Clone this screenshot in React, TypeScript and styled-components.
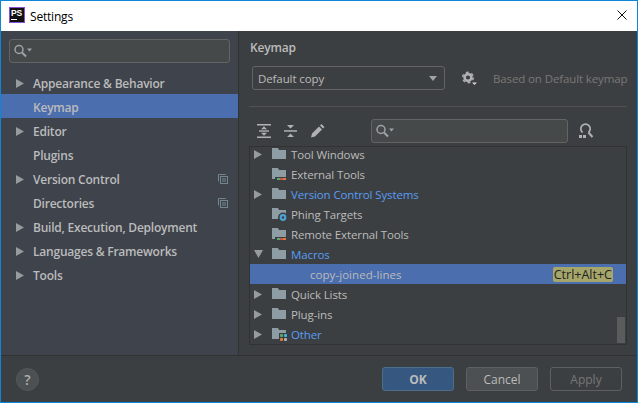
import React from 'react';
import styled, { createGlobalStyle } from 'styled-components';

const GlobalStyle = createGlobalStyle`
  html, body { margin: 0; padding: 0; background: #3c3f41; }
  body { font-family: "Open Sans", "Noto Sans", sans-serif; }
  * { box-sizing: border-box; }
`;

const Window = styled.div`
  width: 638px;
  height: 403px;
  border: 1px solid #0f86d8;
  display: flex;
  flex-direction: column;
  overflow: hidden;
  background: #3c3f41;
`;

const TitleBar = styled.div`
  height: 30px;
  flex: none;
  background: #fff;
  display: flex;
  align-items: center;
  padding: 0 9px 0 8px;
  gap: 5px;
  color: #000;
  font-size: 12px;
  letter-spacing: -0.2px;
`;

const AppIcon = styled.svg`
  margin-bottom: 2px;
`;

const CloseBox = styled.div`
  margin: 0 1px 2px auto;
  display: flex;
`;

const Body = styled.div`
  flex: 1;
  min-height: 0;
  display: flex;
`;

const Sidebar = styled.div`
  width: 238px;
  flex: none;
  background: #3e434c;
  border-right: 1px solid #323232;
  padding-top: 8px;
`;

const SearchBox = styled.div<{ $w: number }>`
  width: ${(p) => p.$w}px;
  height: 24px;
  background: #45494a;
  border: 1px solid #646464;
  border-radius: 3px;
  display: flex;
  align-items: center;
  padding-left: 4px;
  flex: none;
`;

const SideSearch = styled.div`
  padding: 0 0 7px 8px;
`;

const SideRow = styled.div<{ $active?: boolean }>`
  height: 24px;
  display: flex;
  align-items: center;
  padding: 2px 0 0 15px;
  font-size: 12px;
  font-weight: 600;
  letter-spacing: -0.22px;
  color: #bbbbbb;
  background: ${(p) => (p.$active ? '#4b6eaf' : 'transparent')};
`;

const ArrowSlot = styled.span`
  width: 17px;
  flex: none;
  display: flex;
  align-items: center;
`;

const CopyIcon = styled.span`
  margin-left: auto;
  margin-right: 10px;
  display: flex;
`;

const Main = styled.div`
  flex: 1;
  min-width: 0;
  display: flex;
  flex-direction: column;
  padding: 9px 10px 0 10px;
`;

const Heading = styled.div`
  font-size: 12px;
  font-weight: 600;
  color: #bbbbbb;
  height: 16px;
  line-height: 16px;
  letter-spacing: -0.2px;
  margin-left: 1px;
`;

const SchemeRow = styled.div`
  display: flex;
  align-items: center;
  margin: 10px 0 0 3px;
  height: 24px;
`;

const Combo = styled.div`
  width: 193px;
  height: 24px;
  flex: none;
  background: #3c3f41;
  border: 1px solid #646464;
  border-radius: 3px;
  display: flex;
  align-items: center;
  justify-content: space-between;
  padding: 0 7px 0 5px;
  font-size: 11.5px;
  letter-spacing: -0.1px;
  color: #bbbbbb;
`;

const GearSlot = styled.span`
  display: flex;
  flex: none;
  margin-left: 17px;
`;

const Hint = styled.span`
  margin-left: 15px;
  font-size: 11.5px;
  color: #787878;
  white-space: nowrap;
  letter-spacing: -0.12px;
`;

const Rule = styled.div`
  height: 1px;
  background: #515151;
  margin-top: 16px;
`;

const Toolbar = styled.div`
  display: flex;
  align-items: center;
  height: 24px;
  margin: 12px 0 0 8px;
`;

const ToolIcon = styled.span`
  width: 27px;
  flex: none;
  display: flex;
`;

const ToolSearch = styled.div`
  margin-left: 33px;
`;

const FindSlot = styled.span`
  display: flex;
  margin-left: 10px;
`;

const Tree = styled.div`
  position: relative;
  margin-top: 3px;
  height: 199px;
  border: 1px solid #323232;
  overflow: hidden;
`;

const TreeList = styled.div`
  margin-top: -3px;
`;

const TreeRow = styled.div<{ $active?: boolean; $link?: boolean }>`
  height: 20px;
  display: flex;
  align-items: center;
  padding-left: 4px;
  font-size: 11.5px;
  letter-spacing: -0.12px;
  white-space: nowrap;
  color: ${(p) => (p.$link ? '#589df6' : '#bbbbbb')};
  background: ${(p) => (p.$active ? '#4b6eaf' : 'transparent')};
`;

const TreeArrow = styled.span`
  width: 18px;
  flex: none;
  display: flex;
`;

const TreeIcon = styled.span`
  width: 19px;
  flex: none;
  display: flex;
`;

const LeafLabel = styled.span`
  margin-left: 56px;
  letter-spacing: 0.05px;
`;

const Shortcut = styled.span`
  margin-left: auto;
  margin-right: 13px;
  height: 15px;
  display: flex;
  align-items: center;
  padding: 0 1px;
  background: #a6a66a;
  border-radius: 2px;
  color: #222;
  font-size: 12.5px;
  letter-spacing: 0;
`;

const Scroll = styled.div`
  position: absolute;
  right: 1px;
  bottom: 1px;
  width: 8px;
  height: 26px;
  background: #595b5d;
`;

const Footer = styled.div`
  height: 47px;
  flex: none;
  border-top: 1px solid #323232;
  display: flex;
  align-items: center;
  padding: 0 15px;
`;

const Help = styled.div`
  width: 23px;
  height: 23px;
  border-radius: 50%;
  background: #4c5052;
  border: 1px solid #53585a;
  color: #b0b0b0;
  font-size: 14px;
  font-weight: 600;
  display: flex;
  align-items: center;
  justify-content: center;
`;

const Buttons = styled.div`
  margin-left: auto;
  display: flex;
  gap: 12px;
`;

const Button = styled.div<{ $kind?: 'primary' | 'off' }>`
  width: 72px;
  height: 24px;
  border-radius: 3px;
  display: flex;
  align-items: center;
  justify-content: center;
  font-size: 12px;
  font-weight: ${(p) => (p.$kind === 'primary' ? 700 : 400)};
  color: ${(p) => (p.$kind === 'off' ? '#777777' : '#bbbbbb')};
  background: ${(p) =>
    p.$kind === 'primary' ? '#365880' : p.$kind === 'off' ? '#3c3f41' : '#4c5052'};
  border: 1px solid ${(p) => (p.$kind === 'primary' ? '#4c708c' : '#5e6060')};
`;

const Right = () => (
  <svg width="9" height="11" viewBox="0 0 9 11">
    <path d="M0 1l8 4.500-8 4.500z" fill="#989b9d" />
  </svg>
);

const Down = () => (
  <svg width="10" height="10" viewBox="0 0 10 10">
    <path d="M0 1h9L4.500 9z" fill="#989b9d" />
  </svg>
);

const Folder = ({ badge }: { badge?: React.ReactNode }) => (
  <svg width="16" height="16" viewBox="0 0 16 16">
    <path d="M0 2h6l1 2h7v9H0z" fill="#8e9ca3" />
    {badge}
  </svg>
);

const ToolsBadge = (
  <>
    <rect x="3" y="11" width="12" height="5" fill="#3c3f41" />
    <rect x="5" y="12" width="3" height="2" fill="#59a869" />
    <rect x="8" y="12" width="3" height="2" fill="#c75450" />
    <rect x="11" y="12" width="3" height="2" fill="#e07b39" />
  </>
);

const PhingBadge = (
  <>
    <circle cx="11" cy="11.500" r="5" fill="#3c3f41" />
    <circle cx="11" cy="11.500" r="3.400" fill="#4aa3d4" />
    <circle cx="11" cy="11.500" r="1.200" fill="#3c3f41" />
  </>
);

const OtherBadge = (
  <>
    <rect x="7" y="7" width="9" height="9" fill="#3c3f41" />
    <rect x="8" y="8" width="3" height="3" rx="1" fill="#59a869" />
    <rect x="12" y="8" width="3" height="3" rx="1" fill="#40b6e0" />
    <rect x="8" y="12" width="3" height="3" rx="1" fill="#e07b39" />
    <rect x="12" y="12" width="3" height="3" rx="1" fill="#afb1b3" />
  </>
);

const Magnifier = () => (
  <svg width="18" height="14" viewBox="0 0 18 14">
    <circle cx="5" cy="5.500" r="4" fill="none" stroke="#a0a3a5" strokeWidth="1.500" />
    <path d="M8 8.500l4 4" stroke="#a0a3a5" strokeWidth="2" />
    <path d="M13 4.500h5l-2.500 3z" fill="#a0a3a5" />
  </svg>
);

const Copy = () => (
  <svg width="10" height="10" viewBox="0 0 10 10" fill="none" stroke="#73858d">
    <path d="M.5 7.500V.5h7" />
    <rect x="2.500" y="2.500" width="7" height="7" />
    <path d="M4 5h4M4 7h4" />
  </svg>
);

const sideItems = [
  { label: 'Appearance & Behavior', arrow: true },
  { label: 'Keymap', active: true },
  { label: 'Editor', arrow: true },
  { label: 'Plugins' },
  { label: 'Version Control', arrow: true, copy: true },
  { label: 'Directories', copy: true },
  { label: 'Build, Execution, Deployment', arrow: true },
  { label: 'Languages & Frameworks', arrow: true },
  { label: 'Tools', arrow: true },
];

const treeItems: { label: string; arrow?: 'r' | 'd'; link?: boolean; badge?: React.ReactNode }[] = [
  { label: 'Tool Windows', arrow: 'r' },
  { label: 'External Tools', badge: ToolsBadge },
  { label: 'Version Control Systems', arrow: 'r', link: true },
  { label: 'Phing Targets', badge: PhingBadge },
  { label: 'Remote External Tools', badge: ToolsBadge },
  { label: 'Macros', arrow: 'd', link: true },
];

const treeTail: typeof treeItems = [
  { label: 'Quick Lists', arrow: 'r' },
  { label: 'Plug-ins', arrow: 'r' },
  { label: 'Other', arrow: 'r', link: true, badge: OtherBadge },
];

const renderTreeRow = (t: (typeof treeItems)[number]) => (
  <TreeRow key={t.label} $link={t.link}>
    <TreeArrow>{t.arrow === 'r' ? <Right /> : t.arrow === 'd' ? <Down /> : null}</TreeArrow>
    <TreeIcon>
      <Folder badge={t.badge} />
    </TreeIcon>
    {t.label}
  </TreeRow>
);

export default function App() {
  return (
    <Window>
      <GlobalStyle />
      <TitleBar>
        <AppIcon width="16" height="16" viewBox="0 0 16 16">
          <rect x="0.500" y="0.500" width="15" height="15" fill="#111" stroke="#8a4fd8" />
          <rect x="2" y="12" width="6" height="1" fill="#fff" />
          <text x="2" y="9" fontSize="8.500" fontWeight="700" fill="#fff" fontFamily="Liberation Sans">
            PS
          </text>
        </AppIcon>
        Settings
        <CloseBox>
          <svg width="10" height="10" viewBox="0 0 10 10">
            <path d="M.5.5l9 9M9.500.5l-9 9" stroke="#111" />
          </svg>
        </CloseBox>
      </TitleBar>
      <Body>
        <Sidebar>
          <SideSearch>
            <SearchBox $w={221}>
              <Magnifier />
            </SearchBox>
          </SideSearch>
          {sideItems.map((s) => (
            <SideRow key={s.label} $active={s.active}>
              <ArrowSlot>{s.arrow && <Right />}</ArrowSlot>
              {s.label}
              {s.copy && (
                <CopyIcon>
                  <Copy />
                </CopyIcon>
              )}
            </SideRow>
          ))}
        </Sidebar>
        <Main>
          <Heading>Keymap</Heading>
          <SchemeRow>
            <Combo>
              Default copy
              <svg width="8" height="5" viewBox="0 0 8 5">
                <path d="M0 0h8L4 5z" fill="#a0a3a5" />
              </svg>
            </Combo>
            <GearSlot>
              <svg width="16" height="14" viewBox="0 0 16 14" fill="none">
                <circle cx="6" cy="6.500" r="3.400" stroke="#afb1b3" strokeWidth="2.600" />
                <circle cx="6" cy="6.500" r="5.300" stroke="#afb1b3" strokeWidth="1.500" strokeDasharray="2.800 2.750" />
                <path d="M10 11.500h5l-2.500 2.500z" fill="#d4d6d8" />
              </svg>
            </GearSlot>
            <Hint>Based on Default keymap</Hint>
          </SchemeRow>
          <Rule />
          <Toolbar>
            <ToolIcon>
              <svg width="14" height="14" viewBox="0 0 14 14" fill="#afb1b3">
                <rect width="14" height="1.500" />
                <path d="M7 2.200l3 3H4zM7 11.800l3-3H4z" />
                <rect x="2" y="6.300" width="10" height="1.400" />
                <rect y="12.500" width="14" height="1.500" />
              </svg>
            </ToolIcon>
            <ToolIcon>
              <svg width="13" height="14" viewBox="0 0 13 14" fill="#afb1b3">
                <path d="M3 1h7L6.500 4.500zM6.500 9.500L10 13H3z" />
                <rect y="6.200" width="13" height="1.500" />
              </svg>
            </ToolIcon>
            <ToolIcon>
              <svg width="14" height="14" viewBox="0 0 14 14" fill="#afb1b3">
                <path d="M1 9.500L8 2.500 11 5.500 4 12.500 0 13.500zM9 1.500L10.500 0 13.500 3 12 4.500z" />
              </svg>
            </ToolIcon>
            <ToolSearch>
              <SearchBox $w={197}>
                <Magnifier />
              </SearchBox>
            </ToolSearch>
            <FindSlot>
              <svg width="16" height="16" viewBox="0 0 16 16" fill="none">
                <path d="M4.500 9.500a4.700 4.700 0 1 1 6 0" stroke="#afb1b3" strokeWidth="1.700" />
                <path d="M10.500 9.500l4 4.500" stroke="#afb1b3" strokeWidth="2" />
                <path d="M1 12h3v3H1zM5 12h3v3H5z" fill="#afb1b3" />
              </svg>
            </FindSlot>
          </Toolbar>
          <Tree>
            <TreeList>
              {treeItems.map(renderTreeRow)}
              <TreeRow $active>
                <LeafLabel>copy-joined-lines</LeafLabel>
                <Shortcut>Ctrl+Alt+C</Shortcut>
              </TreeRow>
              {treeTail.map(renderTreeRow)}
            </TreeList>
            <Scroll />
          </Tree>
        </Main>
      </Body>
      <Footer>
        <Help>?</Help>
        <Buttons>
          <Button $kind="primary">OK</Button>
          <Button>Cancel</Button>
          <Button $kind="off">Apply</Button>
        </Buttons>
      </Footer>
    </Window>
  );
}
